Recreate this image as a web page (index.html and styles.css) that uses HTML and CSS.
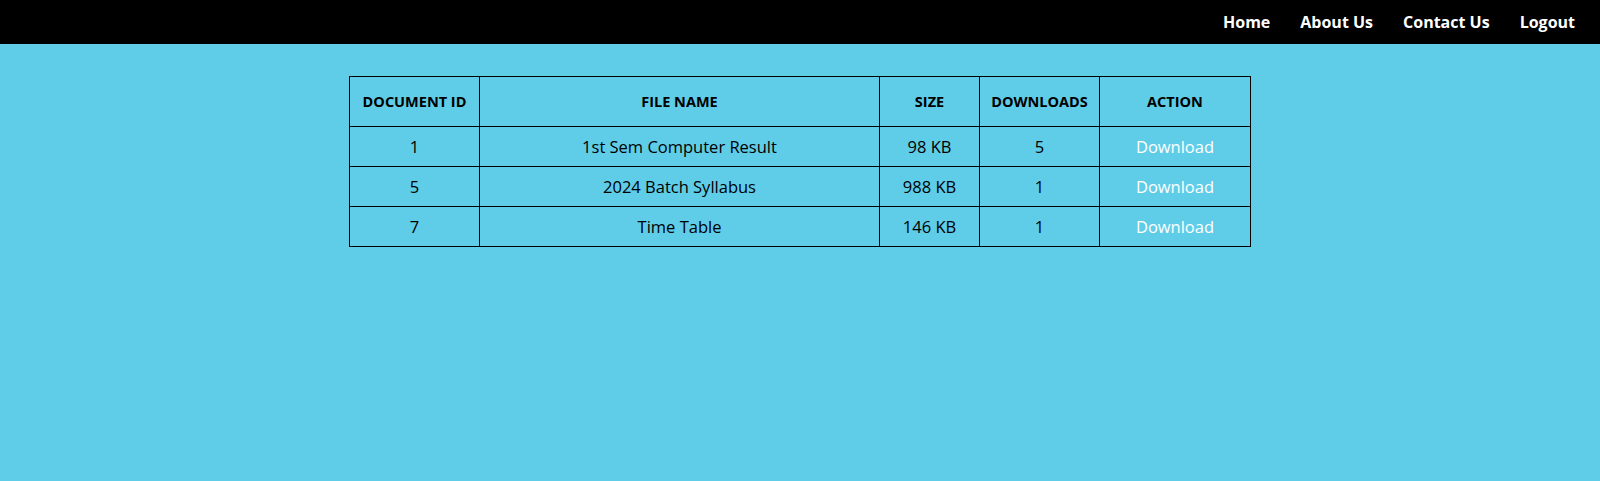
FILE: index.html
```html
<!DOCTYPE html>
<html lang="en">
<head>
    <meta charset="UTF-8">
    <meta name="viewport" content="width=device-width, initial-scale=1.0">
    <title>Documents</title>
    <link rel="stylesheet" href="styles.css">
</head>
<body>
    <!-- Top navigation -->
    <nav class="navbar">
        <a href="#">Home</a>
        <a href="#">About Us</a>
        <a href="#">Contact Us</a>
        <a href="#">Logout</a>
    </nav>

    <!-- Documents table -->
    <main class="content">
        <table class="doc-table">
            <thead>
                <tr>
                    <th class="col-id">Document ID</th>
                    <th class="col-name">File Name</th>
                    <th class="col-size">Size</th>
                    <th class="col-dl">Downloads</th>
                    <th class="col-action">Action</th>
                </tr>
            </thead>
            <tbody>
                <tr>
                    <td>1</td>
                    <td>1st Sem Computer Result</td>
                    <td>98 KB</td>
                    <td>5</td>
                    <td><a href="#">Download</a></td>
                </tr>
                <tr>
                    <td>5</td>
                    <td>2024 Batch Syllabus</td>
                    <td>988 KB</td>
                    <td>1</td>
                    <td><a href="#">Download</a></td>
                </tr>
                <tr>
                    <td>7</td>
                    <td>Time Table</td>
                    <td>146 KB</td>
                    <td>1</td>
                    <td><a href="#">Download</a></td>
                </tr>
            </tbody>
        </table>
    </main>
</body>
</html>
```

FILE: styles.css
```css
/* General Styles */
body {
    margin: 0;
    font-family: 'Open Sans', 'Liberation Sans', sans-serif;
    background: #5fcde8;
    color: #000;
    height: 100vh;
}

/* Navbar */
.navbar {
    background: #000;
    height: 44px;
    display: flex;
    justify-content: flex-end;
    align-items: center;
    gap: 30px;
    padding-right: 25px;
}

.navbar a {
    color: #fff;
    text-decoration: none;
    font-weight: 700;
    font-size: 16px;
}

/* Table */
.content {
    display: flex;
    justify-content: center;
    padding-top: 32px;
}

.doc-table {
    border-collapse: collapse;
    table-layout: fixed;
    width: 896px;
    text-align: center;
    font-size: 16.5px;
}

.doc-table th,
.doc-table td {
    border: 1px solid #000;
    padding: 0;
}

.doc-table th {
    height: 49px;
    font-size: 14.5px;
    font-weight: 700;
    text-transform: uppercase;
}

.doc-table td {
    height: 39px;
}

.doc-table td a {
    color: #fff;
    text-decoration: none;
}

.col-id { width: 129px; }
.col-name { width: 399px; }
.col-size { width: 99px; }
.col-dl { width: 119px; }
.col-action { width: 150px; }
```
